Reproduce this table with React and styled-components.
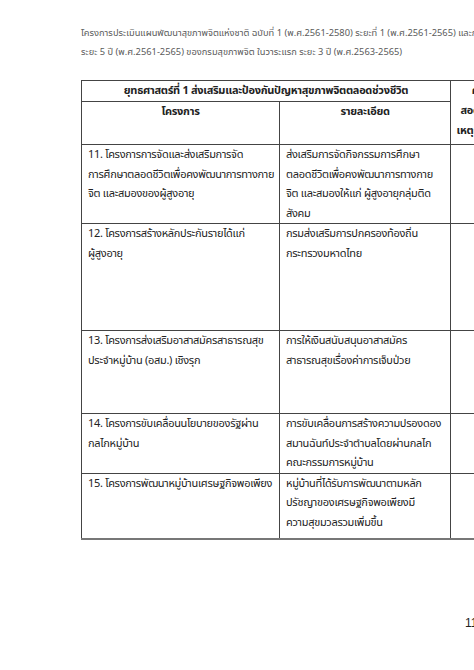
import React from "react";
import styled, { createGlobalStyle } from "styled-components";

const GlobalStyle = createGlobalStyle`
  html, body {
    margin: 0;
    padding: 0;
    background: #fff;
    overflow: hidden;
  }
  body {
    font-family: Tahoma, "Noto Sans Thai", "Noto Sans", "DejaVu Sans", sans-serif;
  }
`;

// each cell keeps the line breaks of the printed page
const rows = [
  {
    no: 11,
    height: 78,
    project: ["11. โครงการการจัดและส่งเสริมการจัด", "การศึกษาตลอดชีวิตเพื่อคงพัฒนาการทางกาย", "จิต และสมองของผู้สูงอายุ"],
    detail: ["ส่งเสริมการจัดกิจกรรมการศึกษา", "ตลอดชีวิตเพื่อคงพัฒนาการทางกาย", "จิต และสมองให้แก่ ผู้สูงอายุกลุ่มติด", "สังคม"],
  },
  {
    no: 12,
    height: 107,
    project: ["12. โครงการสร้างหลักประกันรายได้แก่", "ผู้สูงอายุ"],
    detail: ["กรมส่งเสริมการปกครองท้องถิ่น", "กระทรวงมหาดไทย"],
  },
  {
    no: 13,
    height: 83,
    project: ["13. โครงการส่งเสริมอาสาสมัครสาธารณสุข", "ประจำหมู่บ้าน (อสม.) เชิงรุก"],
    detail: ["การให้เงินสนับสนุนอาสาสมัคร", "สาธารณสุขเรื่องค่าการเจ็บป่วย"],
  },
  {
    no: 14,
    height: 59,
    project: ["14. โครงการขับเคลื่อนนโยบายของรัฐผ่าน", "กลไกหมู่บ้าน"],
    detail: ["การขับเคลื่อนการสร้างความปรองดอง", "สมานฉันท์ประจำตำบลโดยผ่านกลไก", "คณะกรรมการหมู่บ้าน"],
  },
  {
    no: 15,
    height: 66,
    project: ["15. โครงการพัฒนาหมู่บ้านเศรษฐกิจพอเพียง"],
    detail: ["หมู่บ้านที่ได้รับการพัฒนาตามหลัก", "ปรัชญาของเศรษฐกิจพอเพียงมี", "ความสุขมวลรวมเพิ่มขึ้น"],
  },
];

const Page = styled.div`
  width: 620px;
  padding: 24px 0 0 81px;
  box-sizing: border-box;
`;

const RunningHead = styled.div`
  font-size: 9.3px;
  line-height: 19px;
  color: #5a5a5a;
  white-space: nowrap;
  margin-bottom: 18px;
`;

const Table = styled.table`
  border-collapse: collapse;
  table-layout: fixed;
  width: 473px;
  font-size: 11px;
  letter-spacing: -0.3px;
  line-height: 19.5px;
  color: #222;
  border-bottom: 2px solid #777;
`;

const HeadCell = styled.th`
  border: 1px solid #444;
  padding: 0 4px;
  font-weight: bold;
  text-align: center;
  vertical-align: top;
  line-height: 20px;
  white-space: nowrap;
  overflow: hidden;
`;

const HeadRow = styled.tr`
  height: ${(p) => p.$h}px;
`;

const Cell = styled.td`
  border: 1px solid #444;
  padding: 0 6px;
  vertical-align: top;
  white-space: nowrap;
`;

const Line = styled.div``;

const BodyRow = styled.tr`
  height: ${(p) => p.$h}px;
`;

const Footer = styled.div`
  margin-top: 76px;
  padding-left: 384px;
  font-family: "Liberation Sans", Arial, sans-serif;
  font-size: 12px;
  color: #222;
`;

const Lines = ({ items }) => items.map((t) => <Line key={t}>{t}</Line>);

export default function App() {
  return (
    <>
      <GlobalStyle />
      <Page>
        <RunningHead>
          <div>
            โครงการประเมินแผนพัฒนาสุขภาพจิตแห่งชาติ ฉบับที่ 1 (พ.ศ.2561-2580) ระยะที่ 1 (พ.ศ.2561-2565) และการประเมินแผนปฏิบัติราชการ
          </div>
          <div>ระยะ 5 ปี (พ.ศ.2561-2565) ของกรมสุขภาพจิต ในวาระแรก ระยะ 3 ปี (พ.ศ.2563-2565)</div>
        </RunningHead>
        <Table>
          <colgroup>
            <col style={{ width: 198 }} />
            <col style={{ width: 171 }} />
            <col style={{ width: 104 }} />
          </colgroup>
          <thead>
            <HeadRow $h={20}>
              <HeadCell colSpan={2}>ยุทธศาสตร์ที่ 1 ส่งเสริมและป้องกันปัญหาสุขภาพจิตตลอดช่วงชีวิต</HeadCell>
              <HeadCell rowSpan={2}>
                <Lines items={["ความเชื่อมโยง", "สอดคล้องกับแผนฯ", "เหตุผลความเหมาะสม"]} />
              </HeadCell>
            </HeadRow>
            <HeadRow $h={43}>
              <HeadCell>โครงการ</HeadCell>
              <HeadCell>รายละเอียด</HeadCell>
            </HeadRow>
          </thead>
          <tbody>
            {rows.map((r) => (
              <BodyRow key={r.no} $h={r.height}>
                <Cell>
                  <Lines items={r.project} />
                </Cell>
                <Cell>
                  <Lines items={r.detail} />
                </Cell>
                <Cell />
              </BodyRow>
            ))}
          </tbody>
        </Table>
        <Footer>11</Footer>
      </Page>
    </>
  );
}
